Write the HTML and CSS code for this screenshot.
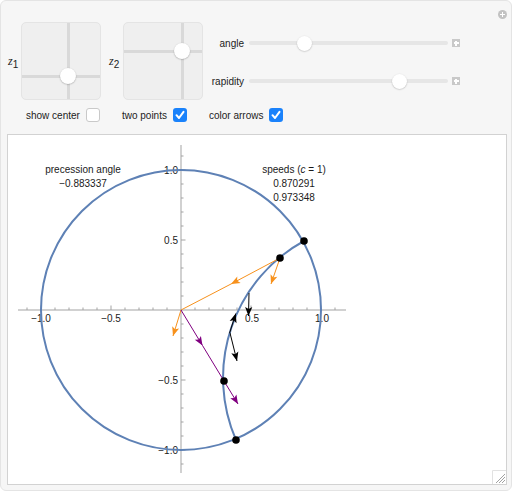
FILE: index.html
```html
<!DOCTYPE html>
<html>
<head>
<meta charset="utf-8">
<link rel="stylesheet" href="styles.css">
</head>
<body>
<div class="panel">
  <div class="top">
    <div class="zlabel z1"><i>z</i><sub>1</sub></div>
    <div class="pad">
      <div class="vline" style="left:46px"></div>
      <div class="hline" style="top:53px"></div>
      <div class="pthumb" style="left:46px;top:53px"></div>
    </div>
    <div class="zlabel z2"><i>z</i><sub>2</sub></div>
    <div class="pad">
      <div class="vline" style="left:58px"></div>
      <div class="hline" style="top:28px"></div>
      <div class="pthumb" style="left:58px;top:28px"></div>
    </div>
    <div class="sliders">
      <div class="srow">
        <span class="slabel">angle</span>
        <div class="track"><div class="sthumb" style="left:55px"></div></div>
        <span class="plus"></span>
      </div>
      <div class="srow">
        <span class="slabel">rapidity</span>
        <div class="track"><div class="sthumb" style="left:150px"></div></div>
        <span class="plus"></span>
      </div>
    </div>
  </div>
  <div class="checks">
    <div class="cgroup g1"><span>show center</span><span class="box"></span></div>
    <div class="cgroup g2"><span>two points</span><span class="box on"><svg viewBox="0 0 14 14" width="14" height="14"><path d="M3.5 7.2 L6 10 L10.5 3.8" fill="none" stroke="#fff" stroke-width="2" stroke-linecap="round" stroke-linejoin="round"/></svg></span></div>
    <div class="cgroup g3"><span>color arrows</span><span class="box on"><svg viewBox="0 0 14 14" width="14" height="14"><path d="M3.5 7.2 L6 10 L10.5 3.8" fill="none" stroke="#fff" stroke-width="2" stroke-linecap="round" stroke-linejoin="round"/></svg></span></div>
  </div>
  <div class="plot">
    <svg class="chart" width="498" height="349" viewBox="8 135 498 349">
      <defs>
        <marker id="ho" markerUnits="userSpaceOnUse" markerWidth="12" markerHeight="12" viewBox="-9 -5 10 10" refX="0" refY="0" orient="auto"><path d="M0 0 L-7.5 -3 L-5.8 0 L-7.5 3 Z" fill="#f7911c"/></marker>
        <marker id="hp" markerUnits="userSpaceOnUse" markerWidth="12" markerHeight="12" viewBox="-9 -5 10 10" refX="0" refY="0" orient="auto"><path d="M0 0 L-7.5 -3 L-5.8 0 L-7.5 3 Z" fill="#800080"/></marker>
        <marker id="hk" markerUnits="userSpaceOnUse" markerWidth="12" markerHeight="12" viewBox="-9 -5 10 10" refX="0" refY="0" orient="auto"><path d="M0 0 L-7.5 -3 L-5.8 0 L-7.5 3 Z" fill="#000"/></marker>
      </defs>
      <g class="axis">
        <path d="M18 310H346M181 145V473"/>
        <path d="M27 310v-2.5M55 310v-2.5M69 310v-2.5M83 310v-2.5M97 310v-2.5M125 310v-2.5M139 310v-2.5M153 310v-2.5M167 310v-2.5M195 310v-2.5M209 310v-2.5M223 310v-2.5M237 310v-2.5M265 310v-2.5M279 310v-2.5M293 310v-2.5M307 310v-2.5M335 310v-2.5"/>
        <path d="M41 310v-4.5M111 310v-4.5M251 310v-4.5M321 310v-4.5"/>
        <path d="M181 156h2.5M181 184h2.5M181 198h2.5M181 212h2.5M181 226h2.5M181 254h2.5M181 268h2.5M181 282h2.5M181 296h2.5M181 324h2.5M181 338h2.5M181 352h2.5M181 366h2.5M181 394h2.5M181 408h2.5M181 422h2.5M181 436h2.5M181 464h2.5"/>
        <path d="M181 170h4.5M181 240h4.5M181 380h4.5M181 450h4.5"/>
      </g>
      <g class="ticklbl">
        <text x="41" y="322" text-anchor="middle">−1.0</text>
        <text x="111" y="322" text-anchor="middle">−0.5</text>
        <text x="252" y="322" text-anchor="middle">0.5</text>
        <text x="322" y="322" text-anchor="middle">1.0</text>
        <text x="178" y="174" text-anchor="end">1.0</text>
        <text x="178" y="244" text-anchor="end">0.5</text>
        <text x="178" y="384" text-anchor="end">−0.5</text>
        <text x="178" y="454" text-anchor="end">−1.0</text>
      </g>
      <circle cx="181" cy="310" r="140" class="curve"/>
      <path d="M304 241 A156 156 0 0 0 236 440" class="curve"/>
      <g class="ao">
        <line x1="280" y1="258" x2="231" y2="284" marker-end="url(#ho)"/>
        <line x1="231" y1="284" x2="181" y2="310"/>
        <line x1="280" y1="258" x2="271" y2="284" marker-end="url(#ho)"/>
        <line x1="181" y1="310" x2="173" y2="336" marker-end="url(#ho)"/>
      </g>
      <g class="ap">
        <line x1="181" y1="310" x2="202.5" y2="345.5" marker-end="url(#hp)"/>
        <line x1="202.5" y1="345.5" x2="224" y2="381"/>
        <line x1="224" y1="381" x2="238" y2="404" marker-end="url(#hp)"/>
      </g>
      <g class="ak">
        <line x1="249" y1="293" x2="248.5" y2="316" marker-end="url(#hk)"/>
        <line x1="230" y1="333" x2="237" y2="361" marker-end="url(#hk)"/>
        <line x1="229.6" y1="333" x2="235.8" y2="313.5" marker-end="url(#hk)"/>
      </g>
      <g class="dots">
        <circle cx="304" cy="241" r="3.8"/>
        <circle cx="280" cy="258" r="3.8"/>
        <circle cx="224" cy="381" r="3.8"/>
        <circle cx="236" cy="440" r="3.8"/>
      </g>
      <g class="ptext">
        <text x="83" y="173" text-anchor="middle">precession angle</text>
        <text x="83" y="187" text-anchor="middle">−0.883337</text>
        <text x="294" y="173" text-anchor="middle">speeds (<tspan font-style="italic">c</tspan> = 1)</text>
        <text x="294" y="187" text-anchor="middle">0.870291</text>
        <text x="294" y="201" text-anchor="middle">0.973348</text>
      </g>
    </svg>
    <svg class="grip" width="14" height="14" viewBox="0 0 14 14">
      <path d="M0.5 14V0.5H14" fill="none" stroke="#e2e2e2"/>
      <path d="M4 13L13 4M7 13L13 7M10 13L13 10" stroke="#8a8a8a" stroke-width="0.8"/>
    </svg>
  </div>
  <span class="corner"></span>
</div>
</body>
</html>
```
FILE: styles.css
```css
html, body {
  margin: 0;
  padding: 0;
  background: #ffffff;
}
body {
  font-family: "Liberation Sans", Arial, Helvetica, sans-serif;
  font-size: 10px;
  color: #222;
}
.panel {
  position: relative;
  box-sizing: border-box;
  width: 512px;
  height: 491px;
  border: 1px solid #e4e4e4;
  border-radius: 6px;
  background: #f6f6f6;
}
.top {
  display: flex;
  align-items: flex-start;
  padding: 21px 0 0 7px;
  height: 78px;
}
.zlabel {
  font-family: "Liberation Serif", "Times New Roman", serif;
  font-size: 12px;
  color: #222;
  margin-top: 32px;
  white-space: nowrap;
}
.zlabel sub {
  font-family: "Liberation Sans", Arial, sans-serif;
  font-size: 10px;
  vertical-align: -3px;
  line-height: 0;
}
.z1 { width: 13px; }
.z2 { width: 14px; padding-left: 8px; }
.pad {
  position: relative;
  box-sizing: border-box;
  width: 80px;
  height: 78px;
  background: #efefef;
  border: 1px solid #e4e4e4;
  border-radius: 5px;
  overflow: hidden;
}
.vline {
  position: absolute;
  top: 0;
  bottom: 0;
  width: 3px;
  margin-left: -1.5px;
  background: #d9d9d9;
}
.hline {
  position: absolute;
  left: 0;
  right: 0;
  height: 3px;
  margin-top: -1.5px;
  background: #d9d9d9;
}
.pthumb {
  position: absolute;
  width: 16px;
  height: 16px;
  margin: -8px 0 0 -8px;
  border-radius: 50%;
  background: #fff;
  box-shadow: 0 0.5px 1.5px rgba(0,0,0,0.3);
}
.sliders {
  display: flex;
  flex-direction: column;
  gap: 22px;
  padding-top: 13px;
}
.srow {
  display: flex;
  align-items: center;
  height: 16px;
}
.slabel {
  width: 41px;
  text-align: right;
  margin-right: 5px;
  color: #222;
}
.track {
  position: relative;
  width: 199px;
  height: 4px;
  border-radius: 2px;
  background: #e6e6e6;
}
.sthumb {
  position: absolute;
  top: 50%;
  width: 15px;
  height: 15px;
  margin: -7.5px 0 0 -7.5px;
  border-radius: 50%;
  background: #fff;
  box-shadow: 0 0.5px 1.5px rgba(0,0,0,0.25);
}
.plus {
  position: relative;
  width: 8px;
  height: 8px;
  margin-left: 4px;
  background: #c9c9c9;
}
.plus::before, .plus::after {
  content: "";
  position: absolute;
  background: #fff;
}
.plus::before { left: 1.5px; right: 1.5px; top: 3.25px; height: 1.5px; }
.plus::after { top: 1.5px; bottom: 1.5px; left: 3.25px; width: 1.5px; }
.checks {
  display: flex;
  align-items: center;
  height: 14px;
  margin-top: 8px;
}
.cgroup {
  display: flex;
  align-items: center;
  gap: 6px;
}
.g1 { margin-left: 25px; }
.g2 { margin-left: 22px; }
.g3 { margin-left: 22px; }
.box {
  box-sizing: border-box;
  width: 14px;
  height: 14px;
  border: 1px solid #c9c9c9;
  border-radius: 3px;
  background: #fff;
  display: block;
}
.box.on {
  border: none;
  background: #1a82fb;
}
.box svg { display: block; }
.plot {
  position: relative;
  box-sizing: border-box;
  width: 500px;
  height: 351px;
  margin: 12px 0 0 6px;
  background: #fff;
  border: 1px solid #d2d2d2;
}
.chart { display: block; }
.axis path {
  fill: none;
  stroke: #a3a3a3;
  stroke-width: 1;
}
.ticklbl text, .ptext text {
  font-family: "Liberation Sans", Arial, sans-serif;
  font-size: 10px;
  fill: #1a1a1a;
}
.curve {
  fill: none;
  stroke: #5e81b5;
  stroke-width: 2;
}
.ao line { stroke: #f7911c; stroke-width: 1; }
.ap line { stroke: #800080; stroke-width: 1; }
.ak line { stroke: #000; stroke-width: 1; }
.dots circle { fill: #000; }
.grip {
  position: absolute;
  right: 0;
  bottom: 0;
}
.corner {
  position: absolute;
  top: 9px;
  right: 4px;
  width: 9px;
  height: 9px;
  border-radius: 50%;
  background: #c2c2c2;
}
.corner::before, .corner::after {
  content: "";
  position: absolute;
  background: #fff;
}
.corner::before { left: 2px; right: 2px; top: 3.75px; height: 1.5px; }
.corner::after { top: 2px; bottom: 2px; left: 3.75px; width: 1.5px; }
```
